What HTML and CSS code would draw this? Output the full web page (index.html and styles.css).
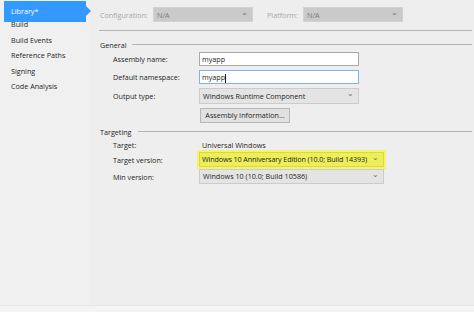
FILE: index.html
```html
<!DOCTYPE html>
<html lang="en">
<head>
    <meta charset="UTF-8">
    <title>Library - Properties</title>
    <link rel="stylesheet" href="styles.css">
</head>
<body>
    <div class="page">
        <div class="sidebar">
            <div class="nav-item active">Library*</div>
            <div class="nav-item">Build</div>
            <div class="nav-item">Build Events</div>
            <div class="nav-item">Reference Paths</div>
            <div class="nav-item">Signing</div>
            <div class="nav-item">Code Analysis</div>
        </div>

        <div class="main">
            <div class="topbar">
                <span class="top-label">Configuration:</span>
                <div class="select disabled config">N/A<span class="chev">&#8964;</span></div>
                <span class="top-label platform-label">Platform:</span>
                <div class="select disabled config">N/A<span class="chev">&#8964;</span></div>
            </div>

            <div class="group-title">General</div>
            <div class="form">
                <label>Assembly name:</label>
                <div class="input">myapp</div>

                <label>Default namespace:</label>
                <div class="input focused">myapp<span class="caret"></span></div>

                <label>Output type:</label>
                <div class="select tall">Windows Runtime Component<span class="chev">&#8964;</span></div>

                <span></span>
                <div><button class="btn">Assembly Information...</button></div>
            </div>

            <div class="group-title second">Targeting</div>
            <div class="form targeting">
                <label>Target:</label>
                <div class="plain">Universal Windows</div>

                <label>Target version:</label>
                <div class="select wide marked"><span class="value">Windows 10 Anniversary Edition (10.0; Build 14393)</span><span class="chev">&#8964;</span></div>

                <label>Min version:</label>
                <div class="select wide">Windows 10 (10.0; Build 10586)<span class="chev">&#8964;</span></div>
            </div>
        </div>
    </div>
    <div class="footer"></div>
</body>
</html>
```

FILE: styles.css
```css
* {
    margin: 0;
    padding: 0;
    box-sizing: border-box;
}

body {
    font-family: 'Open Sans', 'Liberation Sans', sans-serif;
    font-size: 7.2px;
    background: #eeeeee;
    color: #1e1e1e;
    width: 474px;
    height: 312px;
    overflow: hidden;
}

.page {
    display: flex;
    height: 305px;
}

.sidebar {
    width: 90px;
    padding: 1px 0 0 4px;
    background: #f0f0f0;
}

.nav-item {
    height: 15.6px;
    line-height: 15.6px;
    padding-left: 7px;
}

.nav-item.active {
    position: relative;
    height: 21px;
    line-height: 21px;
    width: 82px;
    background: #3399ff;
    color: white;
    margin-bottom: -5px;
}

.nav-item.active::after {
    content: "";
    position: absolute;
    right: -5px;
    top: 5px;
    border-left: 5px solid #3399ff;
    border-top: 5px solid transparent;
    border-bottom: 5px solid transparent;
}

.main {
    flex: 1;
    padding: 0 2px 0 9px;
}

.topbar {
    display: flex;
    align-items: center;
    height: 31px;
    padding: 0 0 1px 1px;
    border-bottom: 1px solid #b4b4b4;
}

.top-label {
    color: #a6a6a6;
    width: 53px;
}

.platform-label {
    margin-left: 14px;
    width: 36px;
}

.select {
    position: relative;
    height: 16px;
    line-height: 14px;
    padding-left: 3px;
    border: 1px solid #cccccc;
    background: #e4e4e4;
}

.select.disabled {
    background: #cacaca;
    border-color: #d2d2d2;
    color: #7a7a7a;
}

.config {
    width: 100px;
    height: 15px;
}

.chev {
    position: absolute;
    right: 4px;
    top: -3px;
    font-size: 8px;
    color: #707070;
}

.group-title {
    display: flex;
    align-items: center;
    height: 13px;
    margin-top: 7px;
    padding-left: 1px;
}

.group-title.second {
    margin-top: 2px;
}

.group-title::after {
    content: "";
    flex: 1;
    border-top: 1px solid #b4b4b4;
    margin-left: 6px;
}

.form {
    display: grid;
    grid-template-columns: 86px 160px;
    grid-template-rows: 14px 14px 16px 15px;
    gap: 4px 0;
    align-items: center;
    padding: 1px 0 0 14px;
}

.form label {
    color: #1e1e1e;
}

.input {
    height: 14px;
    line-height: 12px;
    padding-left: 2px;
    border: 1px solid #a9a9a9;
    background: #ffffff;
}

.input.focused {
    border-color: #7eb4ea;
}

.caret {
    display: inline-block;
    width: 1px;
    height: 9px;
    background: #1e1e1e;
    vertical-align: middle;
}

.btn {
    font-family: inherit;
    font-size: 7.2px;
    display: block;
    width: 90px;
    height: 15px;
    margin: -1px 0 0 1px;
    border: 1px solid #b8b8b8;
    background: #e1e1e1;
    color: #1e1e1e;
}

.targeting {
    grid-template-columns: 86px 185px;
    grid-template-rows: 10px 15px 15px;
    row-gap: 2px;
    padding-top: 2px;
}

.plain {
    padding-left: 3px;
}

.wide {
    height: 15px;
    line-height: 13px;
}

.marked {
    padding-left: 2px;
    background: #eeee5a;
    border-color: #d8d84a;
    box-shadow: 0 0 0 2px #f3f36e;
}

.marked .value {
    letter-spacing: -0.12px;
}

.footer {
    height: 7px;
    background: #f4f4f4;
    border-top: 1px solid #e6e6e6;
}
```
